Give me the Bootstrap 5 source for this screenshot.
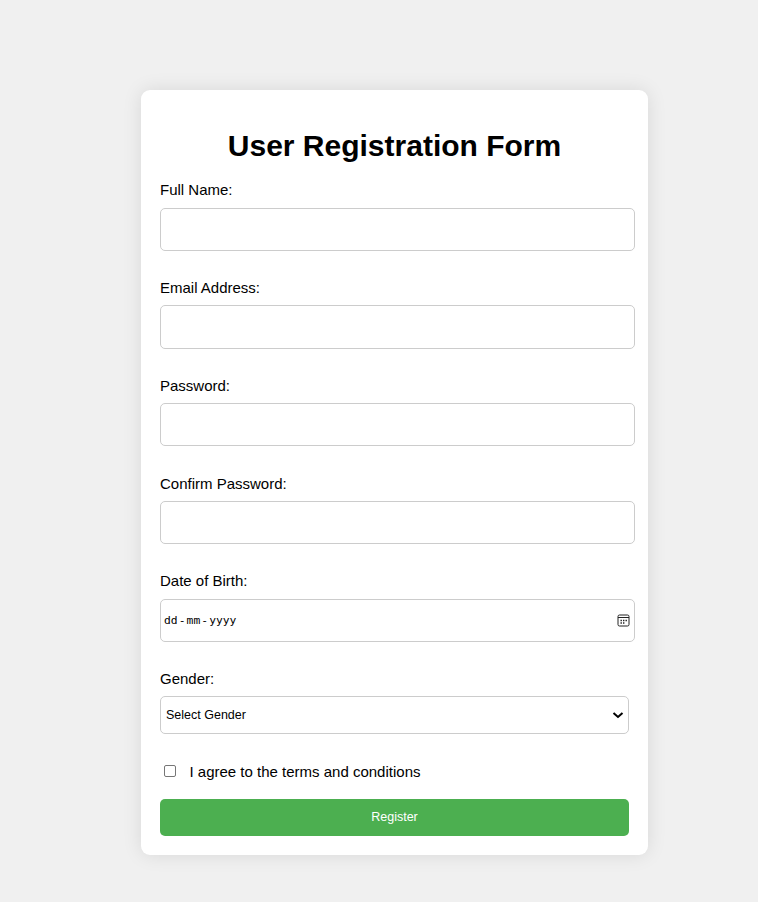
<!DOCTYPE html>
<html lang="en">
<head>
<meta charset="utf-8">
<title>User Registration Form</title>
<link href="https://cdn.jsdelivr.net/npm/bootstrap@5.3.0/dist/css/bootstrap.min.css" rel="stylesheet">
<style>
body { background: #f0f0f0; color: #000; font-family: "Liberation Sans", Arial, sans-serif; font-size: 15px; line-height: 18px; min-height: 902px; padding: 90px 0 0 141px; }
.reg-card { width: 507px; height: 765px; padding: 37px 19px 0; border-radius: 9px; box-shadow: 0 0 19px rgba(0,0,0,.1); }
.reg-title { font-size: 30px; line-height: 38px; margin-bottom: 16.3px; font-weight: 700; }
.field { margin-bottom: 27.45px; }
.field label { display: block; margin-bottom: 8.3px; }
.field .form-control { width: 475px; height: 43.2px; margin-bottom: 28.25px; padding: 0 4px 0 3px; border: 1px solid #ccc; border-radius: 5px; color: #000; }
.field:has(.form-control) { margin-bottom: 0; }
.field .date-box { font: 11.3px "DejaVu Sans Mono", monospace; }
.date-parts { gap: 1.1px; }
.field .form-select { width: 469px; height: 37.8px; padding: 0 5px; border: 1px solid #ccc; border-radius: 5px; color: #000; font-size: 12.5px; line-height: 16px; background-image: none; }
.select-arrow { right: 5px; top: 13.5px; pointer-events: none; }
.agree { height: 18px; margin-bottom: 19px; padding-top: 2px; padding-left: 3.5px; gap: 14px; }
.agree .form-check-input { width: 12px; height: 12px; margin: -2px 0 0; border: 1px solid #767676; border-radius: 2px; }
.btn-register { width: 469px; height: 37px; padding: 0; border: 0; border-radius: 5px; background: #4caf50; color: #fff; font-size: 12.5px; }
</style>
<script src="https://cdn.jsdelivr.net/npm/bootstrap@5.3.0/dist/js/bootstrap.bundle.min.js"></script>
</head>
<body>
<form class="reg-card bg-white">
  <h1 class="reg-title text-center">User Registration Form</h1>
  <div class="field"><label for="name">Full Name:</label><input id="name" type="text" class="form-control"></div>
  <div class="field"><label for="email">Email Address:</label><input id="email" type="email" class="form-control"></div>
  <div class="field"><label for="pass">Password:</label><input id="pass" type="password" class="form-control"></div>
  <div class="field"><label for="pass2">Confirm Password:</label><input id="pass2" type="password" class="form-control"></div>
  <div class="field">
    <label>Date of Birth:</label>
    <div class="form-control date-box d-flex align-items-center justify-content-between" tabindex="0">
      <div class="date-parts d-flex"><span>dd</span><span>-</span><span>mm</span><span>-</span><span>yyyy</span></div>
      <svg width="13" height="13" viewBox="0 0 13 13" fill="none" stroke="#222"><rect x="1" y="1" width="11" height="11" rx="1.5"/><path d="M1 3.5h11"/><path d="M6 6.5h1.4M8.5 6.5h1.4M3.5 9h1.4M6 9h1.4M3.5 6.5h1.4" stroke-width="1.5"/></svg>
    </div>
  </div>
  <div class="field">
    <label for="gender">Gender:</label>
    <div class="position-relative d-flex">
      <select id="gender" class="form-select"><option>Select Gender</option><option>Male</option><option>Female</option></select>
      <svg class="select-arrow position-absolute" width="12" height="10" viewBox="0 0 12 10" fill="none" stroke="#000" stroke-width="2"><path d="M1.5 3L6 7l4.5-4"/></svg>
    </div>
  </div>
  <div class="agree d-flex align-items-center"><input id="agree" type="checkbox" class="form-check-input"><label for="agree">I agree to the terms and conditions</label></div>
  <button type="button" class="btn btn-register">Register</button>
</form>
</body>
</html>
